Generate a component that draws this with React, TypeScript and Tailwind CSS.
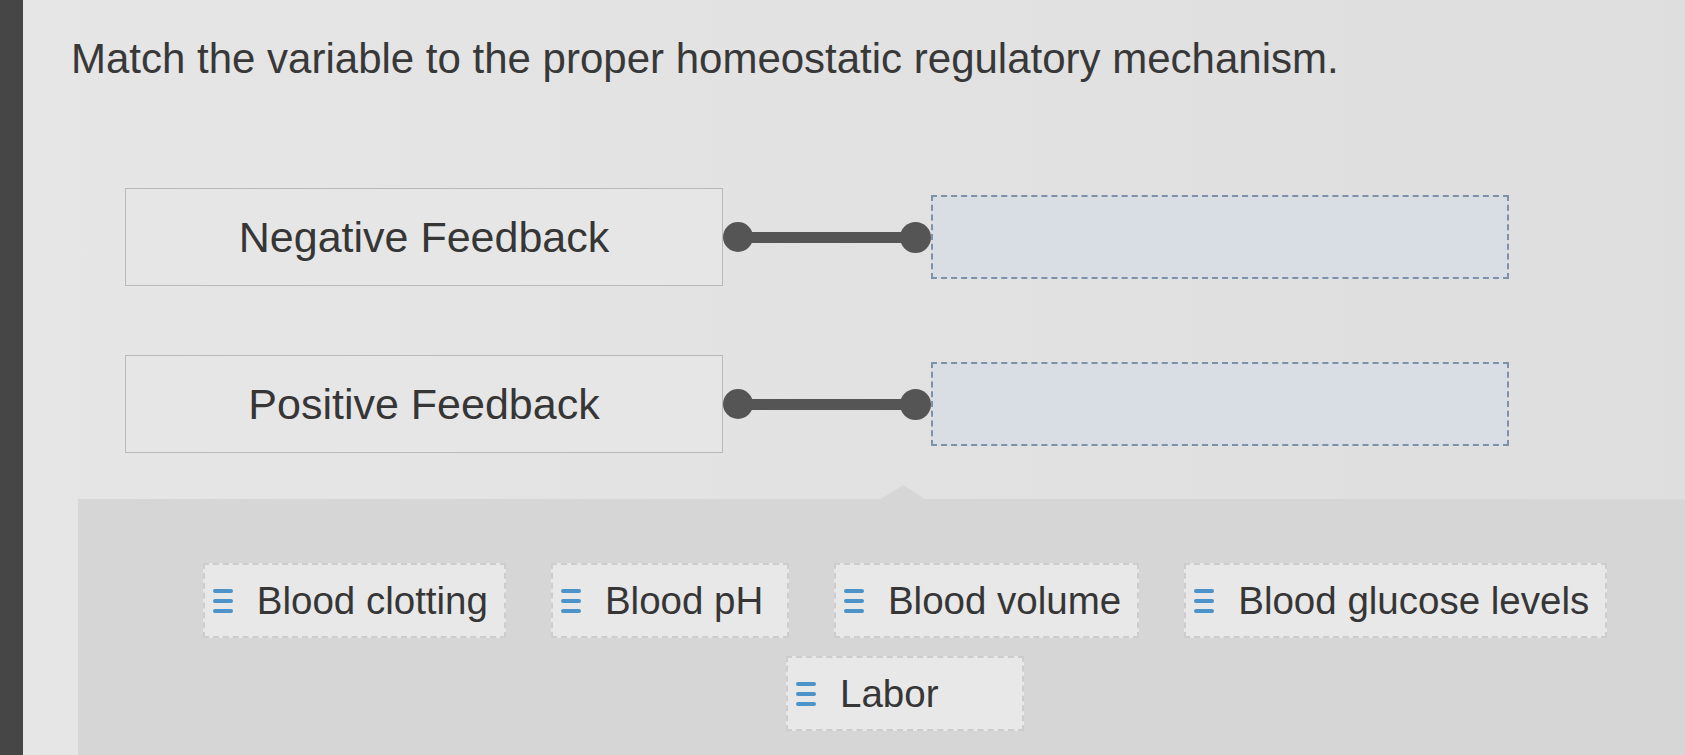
import React from 'react';

const SOURCES = ['Negative Feedback', 'Positive Feedback'];

const CHOICES = ['Blood clotting', 'Blood pH', 'Blood volume', 'Blood glucose levels', 'Labor'];

function DragHandle() {
  return (
    <span className="flex h-[24px] w-[20px] shrink-0 flex-col justify-between">
      <span className="h-[4px] w-full rounded-sm bg-[#4b93c8]" />
      <span className="h-[4px] w-full rounded-sm bg-[#4b93c8]" />
      <span className="h-[4px] w-full rounded-sm bg-[#4b93c8]" />
    </span>
  );
}

function Connector() {
  return (
    <div className="flex w-[208px] shrink-0 items-center">
      <span className="h-[30px] w-[30px] shrink-0 rounded-full bg-[#555555]" />
      <span className="-mx-[2px] h-[11px] flex-1 bg-[#555555]" />
      <span className="h-[31px] w-[31px] shrink-0 rounded-full bg-[#555555]" />
    </div>
  );
}

function MatchRow({ label }: { label: string }) {
  return (
    <div className="flex items-center">
      <div className="flex h-[98px] w-[598px] shrink-0 items-center justify-center border border-[#b9b9b9] bg-[#e6e6e6] text-[43px] text-[#363636]">
        {label}
      </div>
      <Connector />
      <div className="h-[84px] w-[578px] shrink-0 border-2 border-dashed border-[#7d92a8] bg-[#d8dee4]" />
    </div>
  );
}

function Chip({ text }: { text: string }) {
  return (
    <div className="flex h-[75px] min-w-[238px] items-center gap-6 border-2 border-dashed border-[#cdcdcd] bg-[#e8e8e8] pl-2 pr-[16px]">
      <DragHandle />
      <span className="whitespace-nowrap text-[38.5px] text-[#363636]">{text}</span>
    </div>
  );
}

export default function App() {
  return (
    <div
      className="flex h-[755px] w-full overflow-hidden bg-gradient-to-r from-[#e6e6e6] to-[#dedede]"
      style={{ fontFamily: '"Liberation Sans", Arial, sans-serif' }}
    >
      <div className="w-[23px] shrink-0 bg-[#464646]" />

      <div className="flex min-w-0 flex-1 flex-col">
        <h1 className="pl-[48px] pt-[35px] text-[42px] font-normal leading-[48px] text-[#383838]">
          Match the variable to the proper homeostatic regulatory mechanism.
        </h1>

        <div className="mt-[105px] flex flex-col gap-[69px] pl-[102px]">
          {SOURCES.map(s => (
            <MatchRow key={s} label={s} />
          ))}
        </div>

        {/* answer bank */}
        <div className="relative ml-[55px] mt-[46px] flex-1 bg-[#d6d6d6] pl-[47px] pt-[64px]">
          <span className="absolute -top-[14px] left-[803px] h-0 w-0 border-x-[22px] border-b-[14px] border-x-transparent border-b-[#d6d6d6]" />
          <div className="flex flex-wrap justify-center gap-x-[45px] gap-y-[18px]">
            {CHOICES.map(c => (
              <Chip key={c} text={c} />
            ))}
          </div>
        </div>
      </div>
    </div>
  );
}
